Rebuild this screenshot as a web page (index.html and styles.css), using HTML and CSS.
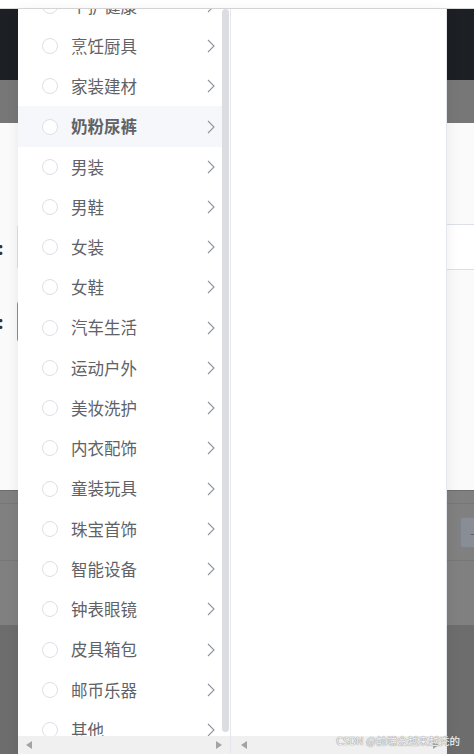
FILE: index.html
```html
<!DOCTYPE html>
<html lang="zh-CN">
<head>
<meta charset="utf-8">
<title>Cascader</title>
<link rel="stylesheet" href="styles.css">
</head>
<body>
<div class="page">
  <div class="bg">
    <div class="bg-top"></div>
    <div class="bg-dark"></div>
    <div class="bg-gray"></div>
    <div class="bg-form">
      <div class="form-row row1"><span class="colon">:</span><div class="input"></div></div>
      <div class="form-row row2"><span class="colon">:</span><div class="input focus"></div></div>
    </div>
    <div class="bg-mid">
      <div class="mid-row"><div class="mini-btn">-</div></div>
    </div>
    <div class="bg-low"></div>
  </div>

  <div class="panel">
    <div class="col col-left">
      <div class="list-view">
        <ul class="list">
          <li class="item"><span class="radio"></span><span class="label">个护健康</span><svg class="chev" viewBox="0 0 8 14"><path d="M1 1l6 6-6 6"/></svg></li>
          <li class="item"><span class="radio"></span><span class="label">烹饪厨具</span><svg class="chev" viewBox="0 0 8 14"><path d="M1 1l6 6-6 6"/></svg></li>
          <li class="item"><span class="radio"></span><span class="label">家装建材</span><svg class="chev" viewBox="0 0 8 14"><path d="M1 1l6 6-6 6"/></svg></li>
          <li class="item active"><span class="radio"></span><span class="label">奶粉尿裤</span><svg class="chev" viewBox="0 0 8 14"><path d="M1 1l6 6-6 6"/></svg></li>
          <li class="item"><span class="radio"></span><span class="label">男装</span><svg class="chev" viewBox="0 0 8 14"><path d="M1 1l6 6-6 6"/></svg></li>
          <li class="item"><span class="radio"></span><span class="label">男鞋</span><svg class="chev" viewBox="0 0 8 14"><path d="M1 1l6 6-6 6"/></svg></li>
          <li class="item"><span class="radio"></span><span class="label">女装</span><svg class="chev" viewBox="0 0 8 14"><path d="M1 1l6 6-6 6"/></svg></li>
          <li class="item"><span class="radio"></span><span class="label">女鞋</span><svg class="chev" viewBox="0 0 8 14"><path d="M1 1l6 6-6 6"/></svg></li>
          <li class="item"><span class="radio"></span><span class="label">汽车生活</span><svg class="chev" viewBox="0 0 8 14"><path d="M1 1l6 6-6 6"/></svg></li>
          <li class="item"><span class="radio"></span><span class="label">运动户外</span><svg class="chev" viewBox="0 0 8 14"><path d="M1 1l6 6-6 6"/></svg></li>
          <li class="item"><span class="radio"></span><span class="label">美妆洗护</span><svg class="chev" viewBox="0 0 8 14"><path d="M1 1l6 6-6 6"/></svg></li>
          <li class="item"><span class="radio"></span><span class="label">内衣配饰</span><svg class="chev" viewBox="0 0 8 14"><path d="M1 1l6 6-6 6"/></svg></li>
          <li class="item"><span class="radio"></span><span class="label">童装玩具</span><svg class="chev" viewBox="0 0 8 14"><path d="M1 1l6 6-6 6"/></svg></li>
          <li class="item"><span class="radio"></span><span class="label">珠宝首饰</span><svg class="chev" viewBox="0 0 8 14"><path d="M1 1l6 6-6 6"/></svg></li>
          <li class="item"><span class="radio"></span><span class="label">智能设备</span><svg class="chev" viewBox="0 0 8 14"><path d="M1 1l6 6-6 6"/></svg></li>
          <li class="item"><span class="radio"></span><span class="label">钟表眼镜</span><svg class="chev" viewBox="0 0 8 14"><path d="M1 1l6 6-6 6"/></svg></li>
          <li class="item"><span class="radio"></span><span class="label">皮具箱包</span><svg class="chev" viewBox="0 0 8 14"><path d="M1 1l6 6-6 6"/></svg></li>
          <li class="item"><span class="radio"></span><span class="label">邮币乐器</span><svg class="chev" viewBox="0 0 8 14"><path d="M1 1l6 6-6 6"/></svg></li>
          <li class="item"><span class="radio"></span><span class="label">其他</span><svg class="chev" viewBox="0 0 8 14"><path d="M1 1l6 6-6 6"/></svg></li>
        </ul>
        <div class="vscroll"><div class="thumb"></div></div>
      </div>
      <div class="hscroll"><span class="arr arr-l"></span><span class="arr arr-r"></span></div>
    </div>
    <div class="col col-right">
      <div class="list-view"></div>
      <div class="hscroll hscroll-r"><span class="arr arr-l"></span><span class="arr arr-r"></span></div>
    </div>
  </div>

  <div class="watermark">CSDN @前端会越来越秃的</div>
</div>
</body>
</html>
```

FILE: styles.css
```css
* { box-sizing: border-box; }
html, body { margin: 0; padding: 0; }
body {
  width: 474px;
  height: 754px;
  overflow: hidden;
  font-family: "Noto Sans CJK SC", "Noto Sans", "Liberation Sans", sans-serif;
  background: #fff;
}
.page {
  position: relative;
  width: 474px;
  height: 754px;
  overflow: hidden;
}

/* background page */
.bg { display: flex; flex-direction: column; height: 754px; }
.bg-top { height: 9px; background: #fff; border-bottom: 1px solid #d9d9d9; }
.bg-dark { height: 71px; background: #1c1f23; }
.bg-gray { height: 43px; background: #777777; }
.bg-form {
  height: 367px;
  background: #fafafa;
  padding-top: 101px;
  display: flex;
  flex-direction: column;
  gap: 30px;
}
.form-row { display: flex; align-items: center; }
.row1 { height: 46px; }
.row2 { height: 43px; }
.colon {
  width: 17px;
  margin-left: -2px;
  margin-right: 2px;
  font-size: 17px;
  color: #333;
  font-weight: bold;
}
.input {
  height: 100%;
  flex: 1;
  border: 1px solid #dcdfe6;
  border-right: none;
  border-radius: 4px 0 0 4px;
  background: #fff;
}
.input.focus { flex: none; width: 220px; border-color: #409eff; border-right: 1px solid #409eff; border-radius: 4px; }
.bg-mid {
  height: 135px;
  background: #808080;
  border-top: 1px solid #6c6c6c;
  padding-top: 12px;
}
.mid-row {
  height: 58px;
  border-top: 1px solid #767676;
  border-bottom: 1px solid #767676;
  display: flex;
  justify-content: flex-end;
  align-items: center;
}
.mini-btn {
  width: 30px;
  height: 31px;
  margin-right: -16px;
  border-radius: 3px;
  background: #898d95;
  border: 1px solid #7e828a;
  color: #5c6068;
  font-size: 14px;
  line-height: 28px;
  padding-left: 9px;
}
.bg-low { flex: 1; background: #6d6d6d; }

/* dropdown panel */
.panel {
  position: absolute;
  left: 18px;
  top: 9px;
  width: 429px;
  height: 745px;
  background: #fff;
  border-right: 1px solid #e4e7ed;
  box-shadow: 0 2px 12px rgba(0, 0, 0, 0.08);
  display: flex;
}
.col { display: flex; flex-direction: column; height: 100%; }
.col-left { width: 213px; border-right: 1px solid #e4e7ed; }
.col-right { flex: 1; }
.list-view { flex: 1; display: flex; overflow: hidden; min-height: 0; }
.list {
  list-style: none;
  margin: -23.3px 0 0 0;
  padding: 0;
  width: 204px;
}
.item {
  height: 40.24px;
  display: flex;
  align-items: center;
  padding-left: 24px;
  padding-right: 7px;
  color: #606266;
  font-size: 16.5px;
}
.item.active { background: #f5f7fa; font-weight: bold; }
.radio {
  width: 16px;
  height: 16px;
  border: 1px solid #dcdfe6;
  border-radius: 50%;
  background: #fff;
  margin-right: 13px;
  flex: none;
}
.label { flex: 1; line-height: 1; }
.chev {
  width: 8px;
  height: 14px;
  fill: none;
  stroke: #909399;
  stroke-width: 1.1;
  flex: none;
}
.vscroll { width: 8px; padding: 0 1px 4px 0; }
.thumb {
  width: 7px;
  height: 100%;
  border-radius: 4px;
  background: #dcdde0;
}
.hscroll {
  height: 18px;
  flex: none;
  background: #f0f0f0;
  display: flex;
  justify-content: space-between;
  align-items: center;
  padding: 0 8px;
}
.hscroll-r { padding: 0 7px 0 10px; }
.arr { width: 0; height: 0; border-top: 4.5px solid transparent; border-bottom: 4.5px solid transparent; }
.arr-l { border-right: 6px solid #a3a3a3; }
.arr-r { border-left: 6px solid #a3a3a3; }

.watermark {
  position: absolute;
  right: 14px;
  bottom: 7px;
  font-size: 10.5px;
  line-height: 12px;
  color: #f4f4f4;
  text-shadow: 0 0 1px #8a8a8a, 0 0 1px #8a8a8a;
  white-space: nowrap;
}
```
